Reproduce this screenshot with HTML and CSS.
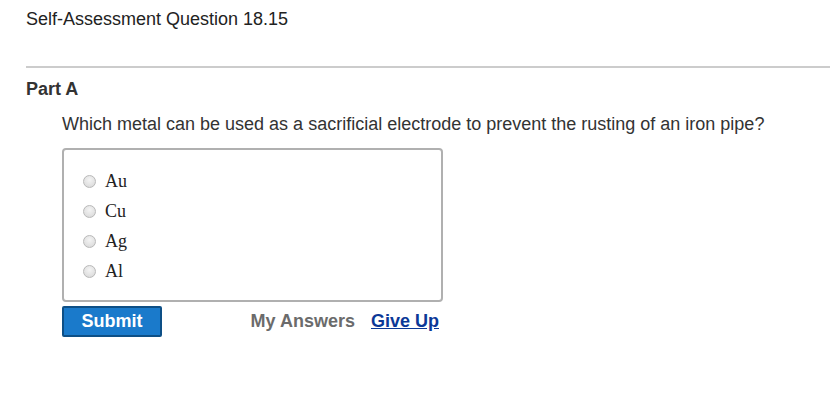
FILE: index.html
```html
<!DOCTYPE html>
<html>
<head>
<meta charset="utf-8">
<link rel="stylesheet" href="styles.css">
</head>
<body>
<div class="page">
  <h1 class="title">Self-Assessment Question 18.15</h1>
  <div class="part">
    <h2 class="part-title">Part A</h2>
    <div class="part-body">
      <p class="question">Which metal can be used as a sacrificial electrode to prevent the rusting of an iron pipe?</p>
      <div class="choices">
        <label class="choice"><span class="radio"></span><span class="choice-text">Au</span></label>
        <label class="choice"><span class="radio"></span><span class="choice-text">Cu</span></label>
        <label class="choice"><span class="radio"></span><span class="choice-text">Ag</span></label>
        <label class="choice"><span class="radio"></span><span class="choice-text">Al</span></label>
      </div>
      <div class="actions">
        <button class="submit">Submit</button>
        <span class="links">
          <span class="my-answers">My Answers</span>
          <a class="give-up" href="#">Give Up</a>
        </span>
      </div>
    </div>
  </div>
</div>
</body>
</html>
```
FILE: styles.css
```css
html, body {
  margin: 0;
  padding: 0;
  background: #fff;
}
body {
  font-family: "Liberation Sans", Arial, sans-serif;
  color: #222;
}
.page {
  padding-left: 26px;
}
.title {
  margin: 0;
  padding-top: 9px;
  height: 57px;
  font-size: 18px;
  font-weight: normal;
  line-height: 20px;
  color: #222;
  border-bottom: 2px solid #cccccc;
  box-sizing: content-box;
}
.part-title {
  margin: 0;
  padding-top: 11px;
  font-size: 18px;
  font-weight: bold;
  line-height: 20px;
  color: #333;
}
.part-body {
  padding-left: 36px;
}
.question {
  margin: 15px 0 0 0;
  font-size: 18px;
  line-height: 20px;
  color: #333;
}
.choices {
  margin-top: 14px;
  width: 381px;
  height: 154px;
  border: 2px solid #b0b0b0;
  border-radius: 4px;
  padding: 22px 0 0 19px;
  box-sizing: border-box;
  display: flex;
  flex-direction: column;
  gap: 12px;
}
.choice {
  display: flex;
  align-items: center;
  gap: 9px;
  height: 18px;
}
.radio {
  width: 11px;
  height: 11px;
  border-radius: 50%;
  border: 1px solid #b9b9b9;
  background: radial-gradient(circle at 50% 35%, #f4f4f4 0%, #e2e2e2 60%, #d4d4d4 100%);
  box-sizing: content-box;
  flex: none;
}
.choice-text {
  font-family: "Liberation Serif", "Times New Roman", serif;
  font-size: 18px;
  color: #222;
}
.actions {
  margin-top: 4px;
  display: flex;
  align-items: center;
  width: 381px;
}
.submit {
  width: 100px;
  height: 31px;
  background: #1a7acb;
  border: 2px solid #0d4f86;
  border-radius: 2px;
  color: #fff;
  font-family: "Liberation Sans", Arial, sans-serif;
  font-size: 18px;
  font-weight: bold;
  padding: 0;
  cursor: pointer;
}
.links {
  margin-left: auto;
  margin-right: 4px;
  display: flex;
  gap: 16px;
  font-size: 18px;
  font-weight: bold;
}
.my-answers {
  color: #6b6b6b;
}
.give-up {
  color: #0b3897;
  text-decoration: underline;
}
```
